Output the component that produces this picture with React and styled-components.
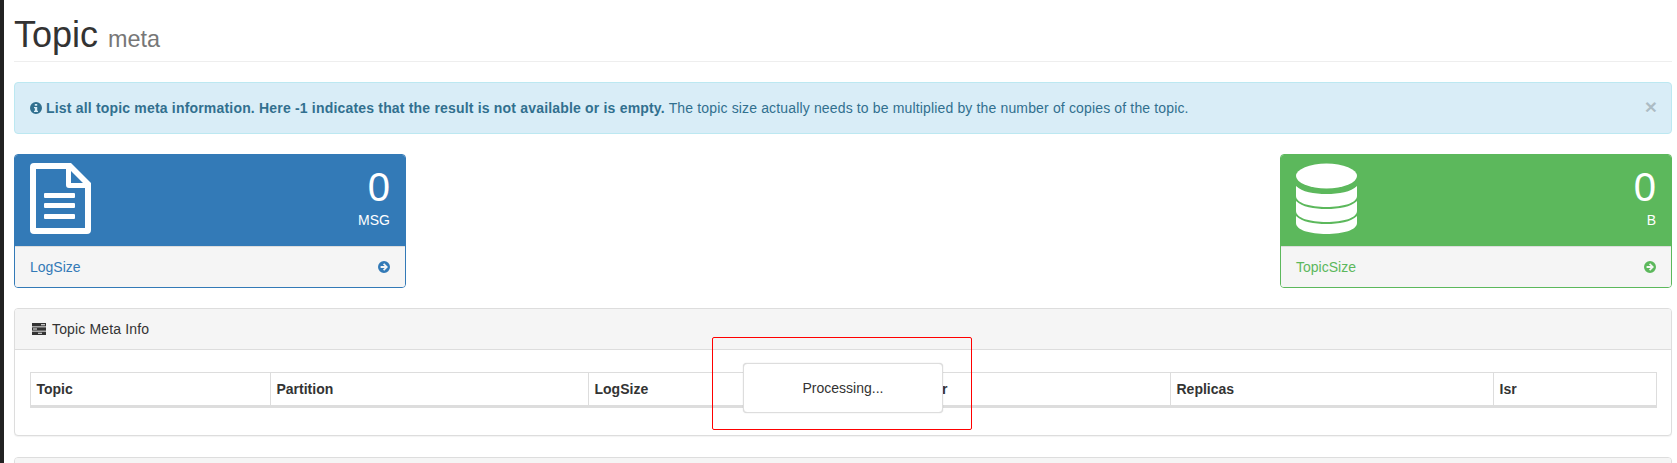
import styled, { createGlobalStyle } from 'styled-components';

const GlobalStyle = createGlobalStyle`
    * {
        box-sizing: border-box;
    }
    html, body {
        margin: 0;
        padding: 0;
        background: #fff;
    }
    body {
        font-family: "Liberation Sans", Arial, sans-serif;
        font-size: 14px;
        line-height: 20px;
        color: #333;
        height: 463px;
        overflow: hidden;
    }
`;

const FileIcon = () => (
    <svg width="61" height="71" viewBox="0 0 61 71">
        <path
            fill="#fff"
            fillRule="evenodd"
            d="M4 0H41L61 20V67a4 4 0 0 1-4 4H4a4 4 0 0 1-4-4V4a4 4 0 0 1 4-4ZM6 6V65H55V25H39a3 3 0 0 1-3-3V6ZM41 8V20H53Z"
        />
        <rect x="14" y="30" width="31" height="5" rx="1" fill="#fff" />
        <rect x="14" y="40" width="31" height="5" rx="1" fill="#fff" />
        <rect x="14" y="51" width="31" height="5" rx="1" fill="#fff" />
    </svg>
);

const DatabaseIcon = () => (
    <svg width="61" height="71" viewBox="0 0 61 71">
        <ellipse cx="30.5" cy="13" rx="30.5" ry="12.5" fill="#fff" />
        <path fill="#fff" d="M0 23C6 29 18 31 30.5 31S55 29 61 23V33C61 40 47 44 30.5 44S0 40 0 33Z" />
        <path fill="#fff" d="M0 38C6 44 18 46 30.5 46S55 44 61 38V48C61 55 47 59 30.5 59S0 55 0 48Z" />
        <path fill="#fff" d="M0 53C6 59 18 61 30.5 61S55 59 61 53V60C61 67 47 71 30.5 71S0 67 0 60Z" />
    </svg>
);

const InfoIcon = () => (
    <svg width="12" height="12" viewBox="0 0 12 12">
        <path
            fill="currentColor"
            fillRule="evenodd"
            d="M6 0a6 6 0 1 1 0 12A6 6 0 0 1 6 0ZM4.8 2v1.8h2.4V2ZM4 5v1.2h.9v2.6H4V10h4V8.8h-.8V5Z"
        />
    </svg>
);

const ArrowIcon = () => (
    <svg width="12" height="12" viewBox="0 0 12 12">
        <path
            fill="currentColor"
            fillRule="evenodd"
            d="M6 0a6 6 0 1 1 0 12A6 6 0 0 1 6 0ZM6.2 2.2 5 3.4 6.7 5H2.6v2h4.1L5 8.6l1.2 1.2L10 6Z"
        />
    </svg>
);

const TasksIcon = () => (
    <svg width="14" height="12" viewBox="0 0 14 12">
        <path fill="#333" d="M0 0H14V3.4H0Z" />
        <path fill="#333" d="M0 4.3H14V7.7H0Z" />
        <path fill="#333" d="M0 8.6H14V12H0Z" />
        <path fill="#f5f5f5" d="M9 1.2H13V2.2H9ZM1 5.5H5V6.5H1ZM6 9.8H10V10.8H6Z" />
    </svg>
);

const DarkEdge = styled.div`
    position: fixed;
    left: 0;
    top: 0;
    bottom: 0;
    width: 4px;
    background: #222;
`;

const Page = styled.div`
    padding: 0 5px 0 14px;
`;

const PageHeader = styled.h1`
    margin: 0 0 20px;
    padding: 15px 0 9px;
    height: 62px;
    font-size: 36px;
    line-height: 40px;
    font-weight: 500;
    color: #333;
    border-bottom: 1px solid #eee;
`;

const Small = styled.small`
    font-size: 23.4px;
    font-weight: 400;
    color: #777;
`;

const Alert = styled.div`
    position: relative;
    height: 52px;
    padding: 15px 35px 15px 15px;
    margin-bottom: 20px;
    background: #d9edf7;
    border: 1px solid #bce8f1;
    border-radius: 4px;
    color: #31708f;
    font-size: 14px;
    line-height: 20px;
    letter-spacing: 0.15px;
    display: flex;
    align-items: center;
    white-space: pre;
`;

const AlertIcon = styled.span`
    display: inline-flex;
    margin-right: 4px;
`;

const Strong = styled.strong`
    font-weight: 700;
    letter-spacing: 0.185px;
`;

const Close = styled.span`
    position: absolute;
    right: 14px;
    top: 13px;
    font-size: 21px;
    line-height: 21px;
    font-weight: 700;
    letter-spacing: 0;
    color: #000;
    opacity: 0.2;
    text-shadow: 0 1px 0 #fff;
`;

const Cards = styled.div`
    display: flex;
    justify-content: space-between;
    margin-bottom: 20px;
`;

const Card = styled.div`
    width: 392px;
    height: 134px;
    border: 1px solid ${(p) => p.$color};
    border-radius: 4px;
    overflow: hidden;
    display: flex;
    flex-direction: column;
`;

const CardHead = styled.div`
    height: 91px;
    padding: 8px 15px 0 15px;
    background: ${(p) => p.$color};
    color: #fff;
    display: flex;
    justify-content: space-between;
`;

const CardText = styled.div`
    text-align: right;
`;

const Huge = styled.div`
    font-size: 40px;
    line-height: 44px;
    margin-top: 2px;
`;

const Unit = styled.div`
    font-size: 14px;
    line-height: 20px;
    margin-top: 1px;
`;

const CardFoot = styled.div`
    flex: 1;
    padding: 0 15px;
    background: #f5f5f5;
    border-top: 1px solid #ddd;
    color: ${(p) => p.$color};
    display: flex;
    align-items: center;
    justify-content: space-between;
`;

const Panel = styled.div`
    height: 128px;
    margin-bottom: 21px;
    background: #fff;
    border: 1px solid #ddd;
    border-radius: 4px;
    box-shadow: 0 1px 1px rgba(0, 0, 0, 0.05);
    position: relative;
`;

const PanelHead = styled.div`
    height: 41px;
    padding: 0 17px;
    background: #f5f5f5;
    border-bottom: 1px solid #ddd;
    border-radius: 3px 3px 0 0;
    letter-spacing: 0.15px;
    display: flex;
    align-items: center;
    gap: 6px;
`;

const PanelBody = styled.div`
    padding: 22px 15px 0;
`;

const Table = styled.table`
    width: 100%;
    table-layout: fixed;
    border-collapse: collapse;
`;

const Th = styled.th`
    width: ${(p) => p.$width}px;
    height: 34px;
    padding: 0 5.5px;
    text-align: left;
    font-weight: 700;
    border: 1px solid #ddd;
    border-bottom: 3px solid #ddd;
`;

const Processing = styled.div`
    position: absolute;
    left: 728px;
    top: 54px;
    width: 200px;
    height: 50px;
    background: #fff;
    border: 1px solid #ddd;
    border-radius: 4px;
    box-shadow: 0 0 1px rgba(0, 0, 0, 0.25);
    display: flex;
    align-items: center;
    justify-content: center;
`;

const RedBox = styled.div`
    position: absolute;
    left: 697px;
    top: 28px;
    width: 260px;
    height: 93px;
    border: 1px solid #f00;
    border-radius: 2px;
`;

const columns = [
    { label: 'Topic', width: 240 },
    { label: 'Partition', width: 318 },
    { label: 'LogSize', width: 307 },
    { label: 'Leader', width: 275 },
    { label: 'Replicas', width: 323 },
    { label: 'Isr', width: 163 },
];

const StatCard = ({ color, icon, unit, label }) => (
    <Card $color={color}>
        <CardHead $color={color}>
            {icon}
            <CardText>
                <Huge>0</Huge>
                <Unit>{unit}</Unit>
            </CardText>
        </CardHead>
        <CardFoot $color={color}>
            <span>{label}</span>
            <ArrowIcon />
        </CardFoot>
    </Card>
);

export default function App() {
    return (
        <>
            <GlobalStyle />
            <DarkEdge />
            <Page>
                <PageHeader>
                    Topic <Small>meta</Small>
                </PageHeader>
                <Alert>
                    <AlertIcon><InfoIcon /></AlertIcon>
                    <Strong>List all topic meta information. Here -1 indicates that the result is not available or is empty.</Strong>
                    {' The topic size actually needs to be multiplied by the number of copies of the topic.'}
                    <Close>×</Close>
                </Alert>
                <Cards>
                    <StatCard color="#337ab7" icon={<FileIcon />} unit="MSG" label="LogSize" />
                    <StatCard color="#5cb85c" icon={<DatabaseIcon />} unit="B" label="TopicSize" />
                </Cards>
                <Panel>
                    <PanelHead>
                        <TasksIcon />
                        Topic Meta Info
                    </PanelHead>
                    <PanelBody>
                        <Table>
                            <thead>
                                <tr>
                                    {columns.map((c) => (
                                        <Th key={c.label} $width={c.width}>{c.label}</Th>
                                    ))}
                                </tr>
                            </thead>
                        </Table>
                    </PanelBody>
                    <Processing>Processing...</Processing>
                    <RedBox />
                </Panel>
                <Panel>
                    <PanelHead />
                </Panel>
            </Page>
        </>
    );
}
